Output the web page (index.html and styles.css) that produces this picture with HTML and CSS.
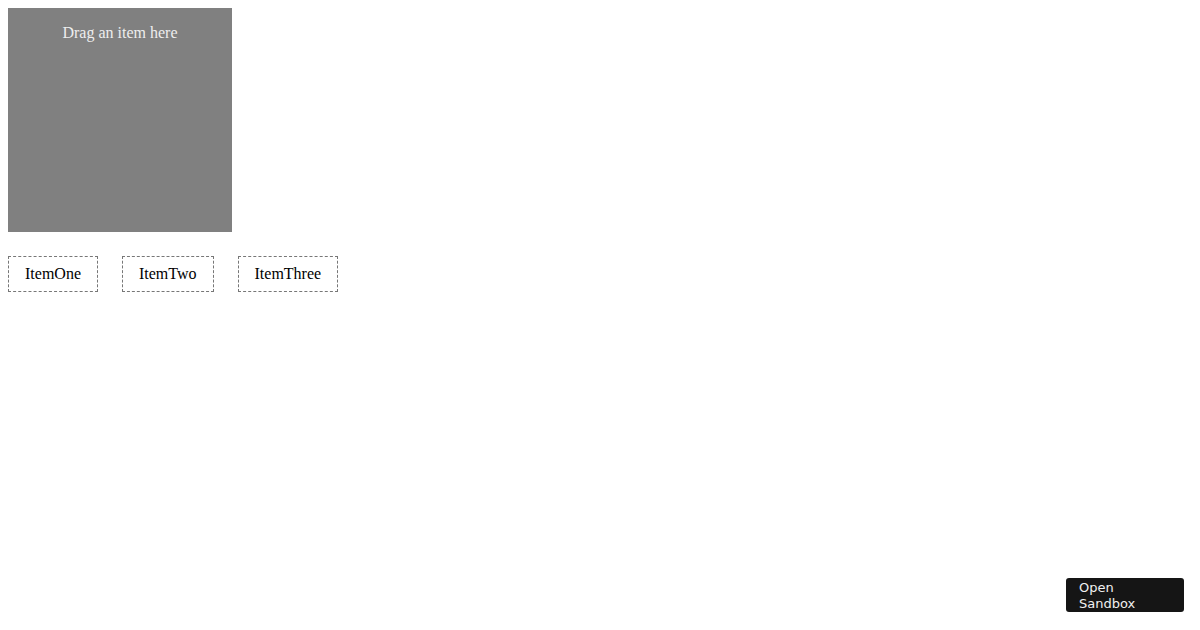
FILE: index.html
```html
<!DOCTYPE html>
<html lang="en">
<head>
    <meta charset="UTF-8">
    <meta name="viewport" content="width=device-width, initial-scale=1.0">
    <title>Drag and Drop</title>
    <link rel="stylesheet" href="styles.css">
</head>
<body>
    <div class="drop-zone">Drag an item here</div>
    <div class="items">
        <div class="item" draggable="true">ItemOne</div>
        <div class="item" draggable="true">ItemTwo</div>
        <div class="item" draggable="true">ItemThree</div>
    </div>
    <button class="sandbox-btn">Open Sandbox</button>
</body>
</html>
```

FILE: styles.css
```css
body {
    margin: 8px;
    font-family: "Liberation Serif", "Times New Roman", serif;
    font-size: 16px;
}
.drop-zone {
    width: 224px;
    height: 224px;
    box-sizing: border-box;
    padding-top: 16px;
    background-color: #808080;
    color: #eeeeee;
    text-align: center;
    line-height: 18px;
}
.items {
    display: flex;
    gap: 24px;
    margin-top: 24px;
}
.item {
    padding: 8px 16px;
    border: 1px dashed #777;
    line-height: 18px;
    color: #000;
}
.sandbox-btn {
    position: fixed;
    right: 16px;
    bottom: 18px;
    width: 118px;
    height: 34px;
    padding: 2px 13px 0;
    background-color: #151515;
    color: #f0f0f0;
    border: none;
    border-radius: 3px;
    font-family: "DejaVu Sans", Verdana, sans-serif;
    font-size: 13px;
    line-height: 16px;
    text-align: left;
    cursor: pointer;
}
```
